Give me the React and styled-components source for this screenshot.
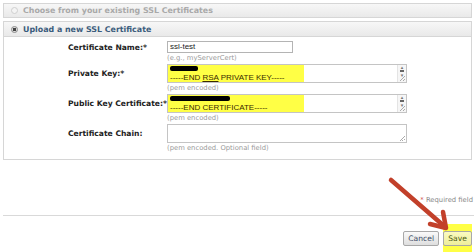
import styled, { createGlobalStyle } from 'styled-components';

const GlobalStyle = createGlobalStyle`
  html, body {
    margin: 0;
    padding: 0;
    background: #fff;
  }
  body {
    font-family: 'DejaVu Sans', Verdana, sans-serif;
  }
`;

const fields = [
  { id: 'name', label: 'Certificate Name:*', kind: 'input', value: 'ssl-test', hint: '(e.g., myServerCert)' },
  { id: 'key', label: 'Private Key:*', kind: 'text', text: '-----END RSA PRIVATE KEY-----', redact: 28, hint: '(pem encoded)' },
  { id: 'cert', label: 'Public Key Certificate:*', kind: 'text', text: '-----END CERTIFICATE-----', redact: 60, hint: '(pem encoded)' },
  { id: 'chain', label: 'Certificate Chain:', kind: 'empty', hint: '(pem encoded. Optional field)' },
];

const App = () => {
  return (
    <Page>
      <GlobalStyle />
      <SectionHeader>
        <Radio />
        <HeaderText>Choose from your existing SSL Certificates</HeaderText>
      </SectionHeader>
      <UploadGroup>
        <SectionHeader $active>
          <Radio $checked />
          <HeaderText $active>Upload a new SSL Certificate</HeaderText>
        </SectionHeader>
        <Form>
          {fields.map(field => (
            <FieldRow key={field.id}>
              <Label>{field.label}</Label>
              {field.kind === 'input' && <TextInput>{field.value}</TextInput>}
              {field.kind === 'text' && (
                <TextBox>
                  <Highlight>
                    <Redaction style={{ width: field.redact }} />
                    <KeyLine>
                      {field.id === 'key' ? (
                        <>
                          -----END <Squiggle>RSA</Squiggle> PRIVATE KEY-----
                        </>
                      ) : (
                        field.text
                      )}
                    </KeyLine>
                  </Highlight>
                  <ScrollBar>
                    <ScrollArrow>▴</ScrollArrow>
                    <ScrollThumb />
                    <ScrollArrow>▾</ScrollArrow>
                  </ScrollBar>
                  <Grip />
                </TextBox>
              )}
              {field.kind === 'empty' && (
                <TextBox>
                  <Grip />
                </TextBox>
              )}
              <Hint>{field.hint}</Hint>
            </FieldRow>
          ))}
        </Form>
      </UploadGroup>
      <RequiredNote>
        <Star>*</Star> Required field
      </RequiredNote>
      <Divider />
      <ButtonBar>
        <Button>Cancel</Button>
        <SaveMark>
          <Button $primary>Save</Button>
        </SaveMark>
      </ButtonBar>
      <Arrow viewBox="0 0 474 252" width="474" height="252">
        <line x1="391" y1="180" x2="444" y2="226" stroke="#c2402a" strokeWidth="4.5" strokeLinecap="round" />
        <polyline
          points="430,224 446,228 443,212"
          fill="none"
          stroke="#c2402a"
          strokeWidth="4.5"
          strokeLinecap="round"
          strokeLinejoin="round"
        />
      </Arrow>
    </Page>
  );
};

const Page = styled.div`
  position: relative;
  width: 474px;
  height: 252px;
  overflow: hidden;
  box-sizing: border-box;
  padding: 3px 2px 0 3px;
  background: #fff;
`;

const SectionHeader = styled.div`
  display: flex;
  align-items: center;
  gap: 5px;
  height: 13px;
  padding-left: 7px;
  border: 1px solid #d6d6d6;
  border-width: ${({ $active }) => ($active ? '0 0 1px 0' : '1px')};
  background: linear-gradient(#f7f7f7, #e9e9e9);
  margin-bottom: 3px;
  ${({ $active }) => $active && 'margin-bottom: 0; height: 14px;'}
`;

const Radio = styled.span`
  width: 5px;
  height: 5px;
  border-radius: 50%;
  border: 1px solid ${({ $checked }) => ($checked ? '#8a8a8a' : '#cfcfcf')};
  background: ${({ $checked }) => ($checked ? 'radial-gradient(#444 0 1.6px, #ddd 2px)' : '#f4f4f4')};
`;

const HeaderText = styled.span`
  font-size: 7.9px;
  font-weight: bold;
  color: ${({ $active }) => ($active ? '#3b5c7c' : '#a9a9a9')};
  white-space: nowrap;
`;

const UploadGroup = styled.div`
  border: 1px solid #d6d6d6;
  background: #fff;
`;

const Form = styled.div`
  display: flex;
  flex-direction: column;
  padding: 4px 0 5px 64px;
`;

const FieldRow = styled.div`
  display: grid;
  grid-template-columns: 99px 240px;
  align-items: center;
`;

const Label = styled.div`
  font-size: 7.6px;
  font-weight: bold;
  color: #222;
  white-space: nowrap;
`;

const TextInput = styled.div`
  box-sizing: border-box;
  width: 126px;
  height: 12px;
  padding: 0 2px;
  border: 1px solid #b4b4b4;
  font-family: 'Liberation Sans', Arial, sans-serif;
  font-size: 8px;
  line-height: 10px;
  color: #222;
`;

const TextBox = styled.div`
  position: relative;
  box-sizing: border-box;
  display: flex;
  height: 19px;
  border: 1px solid #c4c4c4;
  background: #fff;
`;

const Highlight = styled.div`
  width: 136px;
  background: #ffff45;
  padding: 1px 0 0 2px;
  box-sizing: border-box;
`;

const Redaction = styled.div`
  height: 5px;
  border-radius: 2px;
  background: #000;
`;

const KeyLine = styled.div`
  margin-top: 2px;
  font-family: 'Liberation Sans', Arial, sans-serif;
  font-size: 8px;
  line-height: 9px;
  color: #3a2a00;
  white-space: nowrap;
`;

const Squiggle = styled.span`
  text-decoration: underline;
`;

const ScrollBar = styled.div`
  margin-left: auto;
  width: 8px;
  display: flex;
  flex-direction: column;
  align-items: center;
  border-left: 1px solid #e4e4e4;
  background: #f6f6f6;
`;

const ScrollArrow = styled.span`
  font-size: 5px;
  line-height: 4px;
  color: #777;
`;

const ScrollThumb = styled.span`
  width: 4px;
  height: 2px;
  margin: 1px 0;
  background: #666;
`;

const Grip = styled.span`
  position: absolute;
  right: 1px;
  bottom: 1px;
  width: 5px;
  height: 5px;
  background: linear-gradient(135deg, transparent 45%, #aaa 45% 55%, transparent 55% 70%, #aaa 70% 80%, transparent 80%);
`;

const Hint = styled.div`
  grid-column: 2;
  height: 11px;
  font-size: 6.8px;
  line-height: 11px;
  color: #9a9a9a;
  white-space: nowrap;
`;

const RequiredNote = styled.div`
  margin: 35px -1px 0 0;
  text-align: right;
  font-size: 6.8px;
  line-height: 10px;
  color: #888;
  white-space: nowrap;
`;

const Star = styled.span`
  color: #c44;
`;

const Divider = styled.div`
  margin: 10px -2px 0 0;
  border-top: 1px solid #d9d9d9;
`;

const ButtonBar = styled.div`
  display: flex;
  justify-content: flex-end;
  align-items: center;
  gap: 4px;
  margin-top: 8px;
`;

const Button = styled.button`
  box-sizing: border-box;
  height: 15px;
  padding: 0 4px;
  border: 1px solid #a8a8a8;
  border-radius: 2px;
  background: ${({ $primary }) => ($primary ? 'linear-gradient(#fbfbc0, #eeee9a)' : 'linear-gradient(#fafafa, #dedede)')};
  font-family: 'DejaVu Sans', Verdana, sans-serif;
  font-size: 7.6px;
  color: ${({ $primary }) => ($primary ? '#4a5a10' : '#3c4b66')};
  line-height: 13px;
`;

const SaveMark = styled.div`
  display: flex;
  align-items: center;
  justify-content: center;
  width: 29px;
  height: 28px;
  background: #ffff45;
`;

const Arrow = styled.svg`
  position: absolute;
  left: 0;
  top: 0;
  pointer-events: none;
`;

export default App;
